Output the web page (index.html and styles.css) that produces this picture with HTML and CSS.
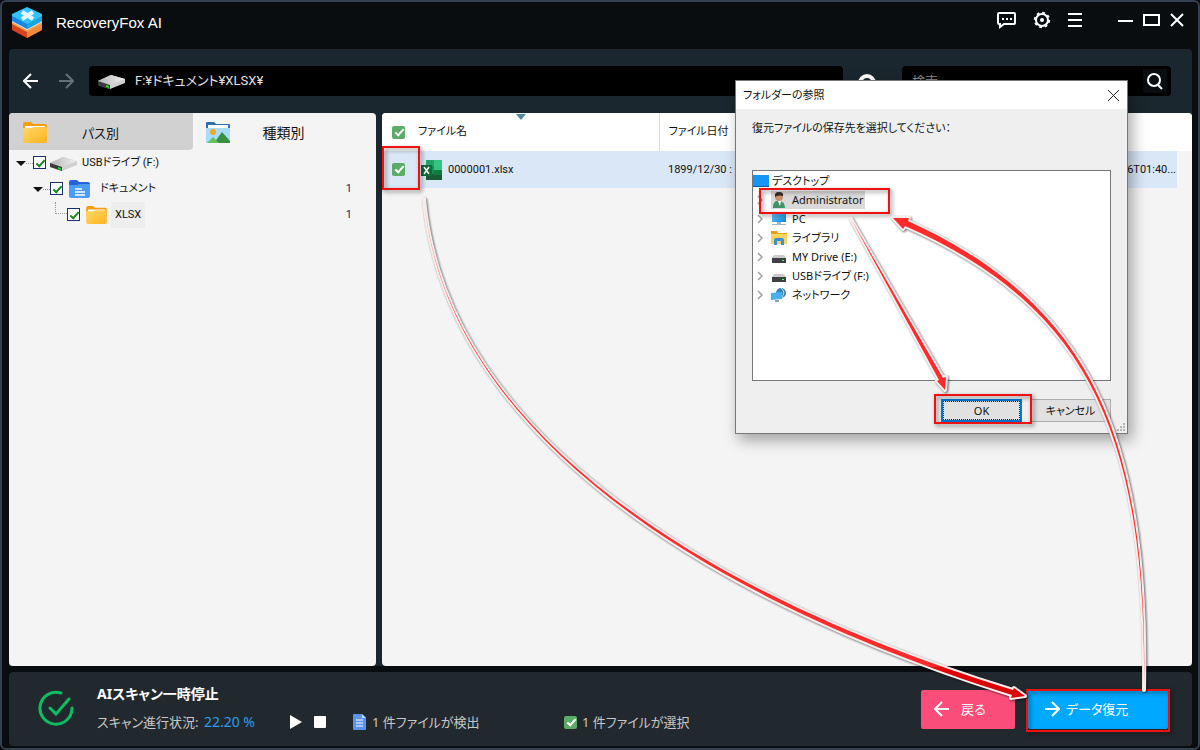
FILE: index.html
```html
<!DOCTYPE html>
<html lang="ja">
<head>
    <meta charset="UTF-8">
    <meta name="viewport" content="width=device-width, initial-scale=1.0">
    <title>RecoveryFox AI</title>
    <link rel="stylesheet" href="styles.css">
</head>
<body>
    <!-- Shared icons -->
    <svg class="defs" width="0" height="0" aria-hidden="true">
        <defs>
            <linearGradient id="folder-fill" x1="0" y1="0" x2="1" y2="1">
                <stop offset="0" stop-color="#ffd868"/>
                <stop offset="1" stop-color="#ffb31f"/>
            </linearGradient>
            <linearGradient id="screen-fill" x1="0" y1="0" x2="1" y2="1">
                <stop offset="0" stop-color="#6fd0ff"/>
                <stop offset="1" stop-color="#1487d8"/>
            </linearGradient>
            <linearGradient id="drive-fill" x1="0" y1="0" x2="1" y2="0">
                <stop offset="0" stop-color="#b5b5b5"/>
                <stop offset="1" stop-color="#f0f0f0"/>
            </linearGradient>
        </defs>
        <symbol id="icon-folder" viewBox="0 0 24 21">
            <path d="M0 2q0-2 2-2h6l2 2h12q2 0 2 2v8H0z" fill="#f59d0e"/>
            <path d="M2 4h20v5H2z" fill="#fff"/>
            <path d="M0 6h8l3-1h13v14q0 2-2 2H2q-2 0-2-2z" fill="url(#folder-fill)"/>
        </symbol>
        <symbol id="icon-drive" viewBox="0 0 28 15">
            <path d="M0 7 13 1l14 4v4L12 15 0 11z" fill="#d0d0d0"/>
            <path d="M0 7 13 1l14 4-15 6z" fill="url(#drive-fill)"/>
            <path d="M0 7l12 4v4L0 11z" fill="#3a3a3a"/>
            <path d="M8 11l3 1v2l-3-1z" fill="#2fd13a"/>
        </symbol>
        <symbol id="icon-disk" viewBox="0 0 14 8">
            <path d="M2 0h10l2 3H0z" fill="#c9cbcc"/>
            <path d="M0 3h14v5H0z" fill="#3d4143"/>
            <path d="M10 5h2v1h-2z" fill="#5ef06b"/>
        </symbol>
        <symbol id="icon-arrow-right" viewBox="0 0 16 16">
            <path d="M1 8h13M8 1l7 7-7 7" fill="none" stroke="currentColor" stroke-width="2"/>
        </symbol>
        <symbol id="icon-arrow-left" viewBox="0 0 16 16">
            <path d="M15 8H2M8 1 1 8l7 7" fill="none" stroke="currentColor" stroke-width="2"/>
        </symbol>
        <symbol id="icon-chevron" viewBox="0 0 6 10">
            <path d="M1 1l4 4-4 4" fill="none" stroke="#a0a0a0" stroke-width="1.5"/>
        </symbol>
    </svg>

    <div class="window">
        <header class="titlebar">
            <svg class="logo" width="32" height="32" viewBox="0 0 32 32">
                <path d="M1 16l15 8 15-8v7l-15 8-15-8z" fill="#d8431d"/>
                <path d="M16 24l15-8v7l-15 8z" fill="#ef8a3a"/>
                <path d="M1 14l15 8 15-8v3l-15 8-15-8z" fill="#f6a24a"/>
                <path d="M1 12l15 8 15-8v3l-15 8-15-8z" fill="#d9e9f2"/>
                <path d="M1 8l15 8 15-8v6l-15 8-15-8z" fill="#1687e8"/>
                <path d="M16 16l15-8v6l-15 8z" fill="#17a7dc"/>
                <path d="M16 0l15 7v2l-15 8L1 9V7z" fill="#35c2fb"/>
                <path d="M11 5l11 7M22 5l-11 7" stroke="#e4f9ff" stroke-width="4"/>
            </svg>
            <span class="app-name">RecoveryFox AI</span>
            <div class="window-tools">
                <button class="tool" aria-label="フィードバック">
                    <svg width="20" height="18" viewBox="0 0 20 18" fill="none" stroke="#fff" stroke-width="2"><path d="M2 2h15q1 0 1 1v9q0 1-1 1H7l-4 3v-3H2q-1 0-1-1V3q0-1 1-1z"/><path d="M5 8h2M9 8h2M13 8h2"/></svg>
                </button>
                <button class="tool" aria-label="設定">
                    <svg width="18" height="18" viewBox="0 0 18 18" fill="none" stroke="#fff"><circle cx="9" cy="9" r="6" stroke-width="2"/><circle cx="9" cy="9" r="7.3" stroke-width="1.8" stroke-dasharray="2.8 2.93"/><circle cx="9" cy="9" r="2" fill="#fff" stroke="none"/></svg>
                </button>
                <button class="tool" aria-label="メニュー">
                    <svg width="16" height="14" viewBox="0 0 16 14" stroke="#fff" stroke-width="2"><path d="M1 1h14M1 7h14M1 13h14"/></svg>
                </button>
                <button class="tool tool-minimize" aria-label="最小化">
                    <svg width="16" height="14" viewBox="0 0 16 14" stroke="#fff" stroke-width="2"><path d="M1 8h15"/></svg>
                </button>
                <button class="tool" aria-label="最大化">
                    <svg width="17" height="14" viewBox="0 0 17 14" fill="none" stroke="#fff" stroke-width="2"><rect x="1" y="2" width="15" height="10"/></svg>
                </button>
                <button class="tool" aria-label="閉じる">
                    <svg width="14" height="14" viewBox="0 0 14 14" stroke="#fff" stroke-width="2"><path d="M1 1l12 12M13 1L1 13"/></svg>
                </button>
            </div>
        </header>

        <main class="workspace">
            <div class="pathbar">
                <button class="nav" aria-label="戻る"><svg width="16" height="16"><use href="#icon-arrow-left"/></svg></button>
                <button class="nav nav-off" aria-label="進む"><svg width="16" height="16"><use href="#icon-arrow-right"/></svg></button>
                <div class="path">
                    <svg width="28" height="15"><use href="#icon-drive"/></svg>
                    <span>F:¥ドキュメント¥XLSX¥</span>
                </div>
                <button class="filter" aria-label="フィルター">
                    <svg width="18" height="18" viewBox="0 0 18 18"><circle cx="9" cy="9" r="7" fill="none" stroke="#fff" stroke-width="4"/></svg>
                </button>
                <div class="search">
                    <input type="text" placeholder="検索" aria-label="検索">
                    <button class="search-btn" aria-label="検索する">
                        <svg width="18" height="18" viewBox="0 0 18 18" fill="none" stroke="#fff" stroke-width="2"><circle cx="8" cy="8" r="6"/><path d="M12 13l4 4"/></svg>
                    </button>
                </div>
            </div>

            <div class="panes">
                <section class="tree-pane">
                    <div class="tabs">
                        <button class="tab tab-path">
                            <svg width="24" height="21"><use href="#icon-folder"/></svg>
                            <span>パス別</span>
                        </button>
                        <button class="tab tab-type">
                            <svg width="24" height="21" viewBox="0 0 24 21">
                                <path d="M0 1q0-1 1-1h7l2 2h13q1 0 1 1v5H0z" fill="#2f6fae"/>
                                <path d="M2 3h20v4H2z" fill="#fff"/>
                                <path d="M0 6h24v14q0 1-1 1H1q-1 0-1-1z" fill="#a9dcfa"/>
                                <circle cx="7" cy="10" r="3" fill="#f5a623"/>
                                <path d="M8 21l8-11 8 9v2z" fill="#3a8f3e"/>
                                <path d="M1 21l6-6 6 6z" fill="#62c067"/>
                            </svg>
                            <span>種類別</span>
                        </button>
                    </div>
                    <ul class="tree">
                        <li class="level-1">
                            <i class="caret"></i><i class="dots"></i>
                            <input type="checkbox" class="tree-check" id="node-usb" checked>
                            <svg width="28" height="15"><use href="#icon-drive"/></svg>
                            <label for="node-usb">USBドライブ (F:)</label>
                        </li>
                        <li class="level-2">
                            <i class="caret"></i><i class="dots"></i>
                            <input type="checkbox" class="tree-check" id="node-doc" checked>
                            <svg width="21" height="18" viewBox="0 0 21 18">
                                <path d="M0 2q0-2 2-2h6l2 2h9q2 0 2 2v4H0z" fill="#2364dd"/>
                                <path d="M0 5h8l2-1h11v12q0 2-2 2H2q-2 0-2-2z" fill="#4a9cff"/>
                                <path d="M6 9h7M6 12h10M6 15h10" stroke="#fff" stroke-width="1.5"/>
                            </svg>
                            <label for="node-doc">ドキュメント</label>
                            <span class="count">1</span>
                        </li>
                        <li class="level-3">
                            <i class="elbow"></i>
                            <input type="checkbox" class="tree-check" id="node-xlsx" checked>
                            <svg width="21" height="18"><use href="#icon-folder"/></svg>
                            <label for="node-xlsx" class="current">XLSX</label>
                            <span class="count">1</span>
                        </li>
                    </ul>
                </section>

                <section class="list-pane">
                    <table class="files">
                        <thead>
                            <tr>
                                <th class="col-check"><input type="checkbox" class="check" aria-label="すべて選択" checked></th>
                                <th class="col-name">ファイル名<i class="sort"></i></th>
                                <th class="col-date">ファイル日付</th>
                                <th class="col-end"></th>
                                <th class="col-edge"></th>
                            </tr>
                        </thead>
                        <tbody>
                            <tr>
                                <td class="col-check"><input type="checkbox" class="check" aria-label="0000001.xlsx" checked></td>
                                <td class="col-name">
                                    <div class="file">
                                        <svg width="21" height="20" viewBox="0 0 21 20">
                                            <path d="M5 0h16v20H5z" fill="#1b8a4b"/>
                                            <path d="M13 0h8v10h-8z" fill="#33c481"/>
                                            <path d="M5 0h8v6H5z" fill="#21a366"/>
                                            <path d="M5 14h16v6H5z" fill="#185c37"/>
                                            <path d="M13 10h8v5h-8z" fill="#107c41"/>
                                            <path d="M0 5h11v11H0z" fill="#0d6b39"/>
                                            <path d="M3 7l5 7M8 7l-5 7" stroke="#fff" stroke-width="1.5"/>
                                        </svg>
                                        0000001.xlsx
                                    </div>
                                </td>
                                <td class="col-date">1899/12/30 : 0</td>
                                <td class="col-end">6T01:40...</td>
                                <td class="col-edge"></td>
                            </tr>
                        </tbody>
                    </table>
                </section>
            </div>
        </main>

        <footer class="statusbar">
            <svg class="done" width="36" height="36" viewBox="0 0 36 36" fill="none" stroke="#0cbd62" stroke-width="3" stroke-linecap="round">
                <path d="M23 3a16 16 0 1 0 11 15"/>
                <path d="M12 18l6 6L31 9"/>
            </svg>
            <div class="status">
                <strong>AIスキャン一時停止</strong>
                <div class="status-line">
                    <span class="progress">スキャン進行状況: <b>22.20 %</b></span>
                    <button class="media" aria-label="再開"><svg width="13" height="14"><path d="M1 0l12 7-12 7z" fill="#fff"/></svg></button>
                    <button class="media media-stop" aria-label="停止"><svg width="12" height="12"><rect width="12" height="12" rx="1" fill="#fff"/></svg></button>
                    <span class="found">
                        <svg width="13" height="16" viewBox="0 0 13 16"><path d="M1 0h8l4 4v11q0 1-1 1H1q-1 0-1-1V1q0-1 1-1z" fill="#5b93ee"/><path d="M9 0l4 4H9z" fill="#c3daff"/><path d="M3 6h7M3 9h7M3 12h7" stroke="#fff"/></svg>
                        1 件ファイルが検出
                    </span>
                    <span class="picked">
                        <input type="checkbox" class="check" id="picked" checked>
                        <label for="picked">1 件ファイルが選択</label>
                    </span>
                </div>
            </div>
            <div class="actions">
                <button class="btn btn-back"><svg width="16" height="16"><use href="#icon-arrow-left"/></svg>戻る</button>
                <button class="btn btn-restore"><svg width="16" height="16"><use href="#icon-arrow-right"/></svg>データ復元</button>
            </div>
        </footer>
    </div>

    <!-- Folder picker -->
    <div class="dialog" role="dialog" aria-labelledby="dialog-title">
        <div class="dialog-title">
            <span id="dialog-title">フォルダーの参照</span>
            <button class="dialog-close" aria-label="ダイアログを閉じる"><svg width="11" height="11" viewBox="0 0 11 11" stroke="#222"><path d="M0 0l11 11M11 0L0 11"/></svg></button>
        </div>
        <div class="dialog-body">
            <p>復元ファイルの保存先を選択してください：</p>
            <ul class="folders">
                <li class="root">
                    <svg width="16" height="12"><rect width="16" height="12" fill="#1496f5"/><path d="M0 11h16v1H0z" fill="#0a5da8"/></svg>
                    <span>デスクトップ</span>
                </li>
                <li>
                    <svg class="chevron" width="6" height="10"><use href="#icon-chevron"/></svg>
                    <div class="selected">
                        <svg width="16" height="16" viewBox="0 0 16 16"><path d="M2 16q0-7 4-7h3q5 1 5 7z" fill="#3f9368"/><path d="M7 9l2 5 1-5z" fill="#fff"/><circle cx="8" cy="5" r="4" fill="#c99069"/><path d="M4 5q-1-5 4-5t4 4q-4-1-6 0z" fill="#3a2b22"/></svg>
                        <span>Administrator</span>
                    </div>
                </li>
                <li>
                    <svg class="chevron" width="6" height="10"><use href="#icon-chevron"/></svg>
                    <svg width="16" height="14" viewBox="0 0 16 14"><rect x="1" width="14" height="10" fill="url(#screen-fill)"/><path d="M6 10h4v2H6zM1 12h14v1H1z" fill="#9fb6c6"/></svg>
                    <span>PC</span>
                </li>
                <li>
                    <svg class="chevron" width="6" height="10"><use href="#icon-chevron"/></svg>
                    <svg width="16" height="14" viewBox="0 0 16 14"><path d="M0 0h6l1 2h9v5H0z" fill="#e3a21a"/><path d="M0 3h16v10H0z" fill="#ffd45e"/><path d="M3 14V9q0-2 2-2h6q2 0 2 2v5h-3v-4H6v4z" fill="#3a8fd8"/></svg>
                    <span>ライブラリ</span>
                </li>
                <li>
                    <svg class="chevron" width="6" height="10"><use href="#icon-chevron"/></svg>
                    <svg class="disk" width="16" height="8"><use href="#icon-disk"/></svg>
                    <span>MY Drive (E:)</span>
                </li>
                <li>
                    <svg class="chevron" width="6" height="10"><use href="#icon-chevron"/></svg>
                    <svg class="disk" width="16" height="8"><use href="#icon-disk"/></svg>
                    <span>USBドライブ (F:)</span>
                </li>
                <li>
                    <svg class="chevron" width="6" height="10"><use href="#icon-chevron"/></svg>
                    <svg width="16" height="14" viewBox="0 0 16 14"><circle cx="10" cy="5" r="5" fill="#3b83b5"/><path d="M10 0q5 4 1 9" stroke="#bde6fb" fill="none"/><path d="M0 5l11-1v7L0 12z" fill="#45b3f3"/><path d="M4 12h4v2H4z" fill="#8aa3b3"/></svg>
                    <span>ネットワーク</span>
                </li>
            </ul>
            <div class="dialog-buttons">
                <button class="ok">OK</button>
                <button class="cancel">キャンセル</button>
            </div>
        </div>
        <svg class="grip" width="8" height="8" viewBox="0 0 8 8" fill="#b5b5b5"><path d="M6 0h2v2H6zM3 3h2v2H3zM6 3h2v2H6zM0 6h2v2H0zM3 6h2v2H3zM6 6h2v2H6z"/></svg>
    </div>

    <!-- Step marks: boxes and arrows over the window -->
    <svg class="marks" width="1200" height="750" viewBox="0 0 1200 750" aria-hidden="true">
        <defs>
            <linearGradient id="mark-red" gradientUnits="userSpaceOnUse" x1="0" y1="666" x2="0" y2="668">
                <stop offset="0" stop-color="#ff2a2a"/>
                <stop offset="1" stop-color="#dc0404"/>
            </linearGradient>
        </defs>
        <g class="boxes">
            <rect x="383" y="147" width="36" height="42"/>
            <rect x="760" y="189" width="129" height="24"/>
            <rect x="935" y="395" width="96" height="28"/>
            <rect x="1027" y="690" width="142" height="41"/>
        </g>
        <g class="arrows">
            <path d="M424 199C444 425 690 594 1012 695L1011 698 1025 696 1014 688 1013 690C691 591 445 425 424 199z"/>
            <path d="M851 219L939 380 937 381 945 390 946 377 943 378 851 219z"/>
            <path d="M1144 690C1149 430 1087 303 908 221L909 218 893 218 903 229 905 226C1085 305 1147 430 1144 690z"/>
        </g>
    </svg>
</body>
</html>
```

FILE: styles.css
```css
* {
    box-sizing: border-box;
}

body {
    margin: 0;
    background: #05080a;
    color: #111;
    font-family: "Noto Sans", "Noto Sans CJK JP", sans-serif;
    font-size: 12px;
    line-height: 18px;
    font-feature-settings: "palt";
}

button,
input {
    font: inherit;
    font-feature-settings: inherit;
    color: inherit;
    margin: 0;
}

button {
    padding: 0;
    border: none;
    background: none;
    cursor: pointer;
}

svg {
    display: block;
    flex: none;
}

ul {
    list-style: none;
    margin: 0;
    padding: 0;
}

.defs {
    position: absolute;
}

/* Window frame */
.window {
    display: flex;
    flex-direction: column;
    min-height: 100vh;
    padding: 0 6px 2px 7px;
    border: 2px solid #33404f;
    border-radius: 6px;
    background: #090d10;
}

.titlebar {
    display: flex;
    align-items: center;
    height: 47px;
    padding: 0 8px 6px 2px;
}

.app-name {
    margin-left: 13px;
    color: #fff;
    font-family: "Liberation Sans", sans-serif;
    font-size: 15px;
}

.window-tools {
    display: flex;
    align-items: center;
    gap: 16px;
    height: 18px;
    margin: 0 0 6px auto;
}

.tool-minimize {
    margin-left: 18px;
}

.tool:nth-child(n+5) {
    margin-left: -6px;
}

.workspace {
    flex: 1;
    display: flex;
    flex-direction: column;
    border-radius: 4px 4px 0 0;
    background: #1b272e;
}

/* Path and search */
.pathbar {
    display: flex;
    align-items: center;
    height: 64px;
    padding: 0 21px 0 10px;
}

.nav {
    display: grid;
    place-items: center;
    width: 24px;
    height: 24px;
    margin-right: 11px;
    color: #fff;
}

.nav-off {
    color: #667078;
}

.path {
    flex: 1;
    display: flex;
    align-items: center;
    gap: 9px;
    height: 30px;
    padding-left: 9px;
    border-radius: 4px;
    background: #000;
    color: #e2e2e2;
    font-family: Roboto, "Noto Sans CJK JP", sans-serif;
    font-size: 13px;
}

.filter {
    display: grid;
    place-items: center;
    width: 28px;
    height: 28px;
    margin: 4px 21px 0 10px;
}

.search {
    display: flex;
    align-items: center;
    width: 269px;
    height: 30px;
    padding: 0 4px 0 10px;
    border-radius: 4px;
    background: #000;
}

.search input {
    flex: 1;
    min-width: 0;
    height: 24px;
    padding: 0;
    border: none;
    outline: none;
    background: none;
    color: #fff;
    font-size: 13px;
}

.search input::placeholder {
    color: #8a8a8a;
}

.search-btn {
    display: grid;
    place-items: center;
    width: 24px;
    height: 24px;
    background: #0a0d10;
}

.panes {
    flex: 1;
    display: flex;
    gap: 6px;
}

.tree-pane,
.list-pane {
    border-radius: 4px;
    background: #f4f4f4;
    overflow: hidden;
}

.tree-pane {
    width: 367px;
}

.list-pane {
    flex: 1;
}

/* Tabs */
.tabs {
    display: flex;
    height: 37px;
}

.tab {
    display: flex;
    align-items: center;
    width: 184px;
    padding: 2px 14px 0;
    font-size: 13px;
}

.tab span {
    margin-left: 35px;
}

.tab-path {
    border-radius: 0 0 4px 0;
    background: #d1d1d1;
}

.tab-type {
    padding-left: 13px;
    font-size: 14px;
}

.tab-type span {
    margin-left: 33px;
}

/* Folder tree */
.tree li {
    display: flex;
    align-items: center;
    height: 26px;
    font-family: Roboto, "Noto Sans CJK JP", sans-serif;
    font-size: 11px;
}

.tree .level-1 {
    padding-left: 7px;
}

.tree .level-2 {
    padding-left: 24px;
}

.tree .level-3 {
    padding-left: 46px;
}

.caret {
    border: 5px solid transparent;
    border-top: 5px solid #111;
    border-bottom: none;
}

.dots {
    width: 7px;
    border-top: 1px dotted #999;
}

.elbow {
    width: 12px;
    height: 12px;
    margin-bottom: 14px;
    border-left: 1px dotted #999;
    border-bottom: 1px dotted #999;
}

.tree-check,
.check {
    display: block;
    position: relative;
    flex: none;
    appearance: none;
    width: 13px;
    height: 13px;
}

.tree-check {
    margin: 0 4px 2px 0;
    border: 1px solid #1d2f6b;
    background: #fff;
}

.level-2 .tree-check,
.level-3 .tree-check {
    margin-right: 6px;
}

.tree-check::after,
.check::after {
    content: "";
    position: absolute;
    left: 4px;
    top: 1px;
    width: 3px;
    height: 7px;
    border: solid #138a1b;
    border-width: 0 2px 2px 0;
    transform: rotate(42deg);
}

.check {
    border-radius: 2px;
    background: #5cab68;
}

.check::after {
    left: 5px;
    border-color: #fff;
}

.tree label {
    margin-left: 4px;
}

.level-2 label {
    margin-left: 10px;
}

.tree .current {
    padding: 4px;
    background: #eee;
}

.count {
    margin: 0 24px 0 auto;
    color: #1b2a66;
}

/* File list */
.files {
    width: 100%;
    table-layout: fixed;
    border-collapse: collapse;
    font-family: Roboto, "Noto Sans CJK JP", sans-serif;
    font-size: 11px;
}

.files th,
.files td {
    position: relative;
    height: 37px;
    padding: 0;
    font-weight: normal;
    text-align: left;
    white-space: nowrap;
}

.files th {
    height: 38px;
    background: #fff;
}

.files td {
    background: #dae7f6;
}

.files .col-check {
    width: 36px;
    padding-left: 10px;
}

.files .col-name {
    width: 241px;
}

.files th.col-name {
    border-right: 1px solid #cfe3ec;
}

.files .col-date {
    width: 200px;
    padding-left: 9px;
}

.files .col-end {
    padding-right: 1px;
    text-align: right;
}

.files .col-edge {
    width: 15px;
}

.files td.col-edge {
    background: #f4f4f4;
}

.sort {
    position: absolute;
    left: 98px;
    top: 1px;
    border: 5px solid transparent;
    border-top: 6px solid #4e8c9a;
    border-bottom: none;
}

.file {
    display: flex;
    align-items: center;
    gap: 6px;
    padding-left: 3px;
}

/* Status bar */
.statusbar {
    display: flex;
    align-items: center;
    height: 74px;
    margin-top: 6px;
    padding: 0 24px 2px 29px;
    border-radius: 4px;
    background: #22292e;
    color: #c8c8c8;
}

.status {
    margin-left: 23px;
    font-size: 13px;
}

.status strong {
    display: block;
    margin-bottom: 10px;
    color: #fff;
    font-size: 14px;
}

.status-line,
.found,
.picked {
    display: flex;
    align-items: center;
}

.progress {
    width: 192px;
    white-space: nowrap;
}

.progress b {
    margin-left: 2px;
    color: #2a9ee8;
    font-size: 14px;
    font-weight: normal;
}

.media-stop {
    margin-left: 12px;
}

.found {
    gap: 6px;
    width: 211px;
    margin-left: 27px;
}

.picked {
    gap: 5px;
}

.actions {
    display: flex;
    gap: 13px;
    margin: 2px 0 0 auto;
}

.btn {
    display: flex;
    align-items: center;
    gap: 11px;
    height: 39px;
    padding-left: 13px;
    border-radius: 2px;
    color: #fff;
    font-size: 13px;
}

.btn-back {
    width: 94px;
    background: #fa4d7a;
}

.btn-restore {
    gap: 6px;
    width: 140px;
    padding-left: 16px;
    background: #00a8ff;
}

/* Folder picker */
.dialog {
    position: absolute;
    left: 735px;
    top: 80px;
    width: 393px;
    border: 1px solid #777;
    background: #efefef;
    box-shadow: 4px 6px 14px rgba(0, 0, 0, 0.35);
    font-size: 11px;
}

.dialog-title {
    display: flex;
    align-items: center;
    justify-content: space-between;
    height: 28px;
    padding: 0 8px 0 7px;
    background: #fff;
}

.dialog-body {
    padding: 10px 16px 11px;
}

.dialog-body p {
    margin: 0 0 33px;
}

.folders {
    height: 211px;
    border: 1px solid #777;
    background: #fff;
}

.folders li {
    display: flex;
    align-items: center;
    gap: 5px;
    height: 19px;
    padding-left: 4px;
}

.folders .root {
    gap: 3px;
    padding-left: 0;
}

.chevron {
    margin-right: 3px;
}

.disk {
    margin-top: 4px;
}

.selected {
    display: flex;
    align-items: center;
    gap: 5px;
    padding-right: 2px;
    background: #d9d9d9;
}

.dialog-buttons {
    display: flex;
    justify-content: flex-end;
    gap: 8px;
    margin-top: 18px;
}

.dialog-buttons button {
    width: 81px;
    height: 23px;
    border: 1px solid #adadad;
    background: #e1e1e1;
}

.dialog-buttons .ok {
    border: 2px solid #0078d7;
    outline: 1px dotted #222;
    outline-offset: -3px;
}

.grip {
    position: absolute;
    right: 2px;
    bottom: 2px;
}

/* Step marks */
.marks {
    position: absolute;
    left: 0;
    top: 0;
    pointer-events: none;
}

.boxes rect {
    fill: none;
    stroke: #f01010;
    stroke-width: 2;
    filter: drop-shadow(2px 2px 2px rgba(0, 0, 0, 0.5));
}

.arrows path {
    fill: url(#mark-red);
    stroke: #f7eded;
    stroke-width: 4;
    stroke-linejoin: round;
    paint-order: stroke;
    filter: drop-shadow(1px 1px 1px rgba(0, 0, 0, 0.6));
}
```
